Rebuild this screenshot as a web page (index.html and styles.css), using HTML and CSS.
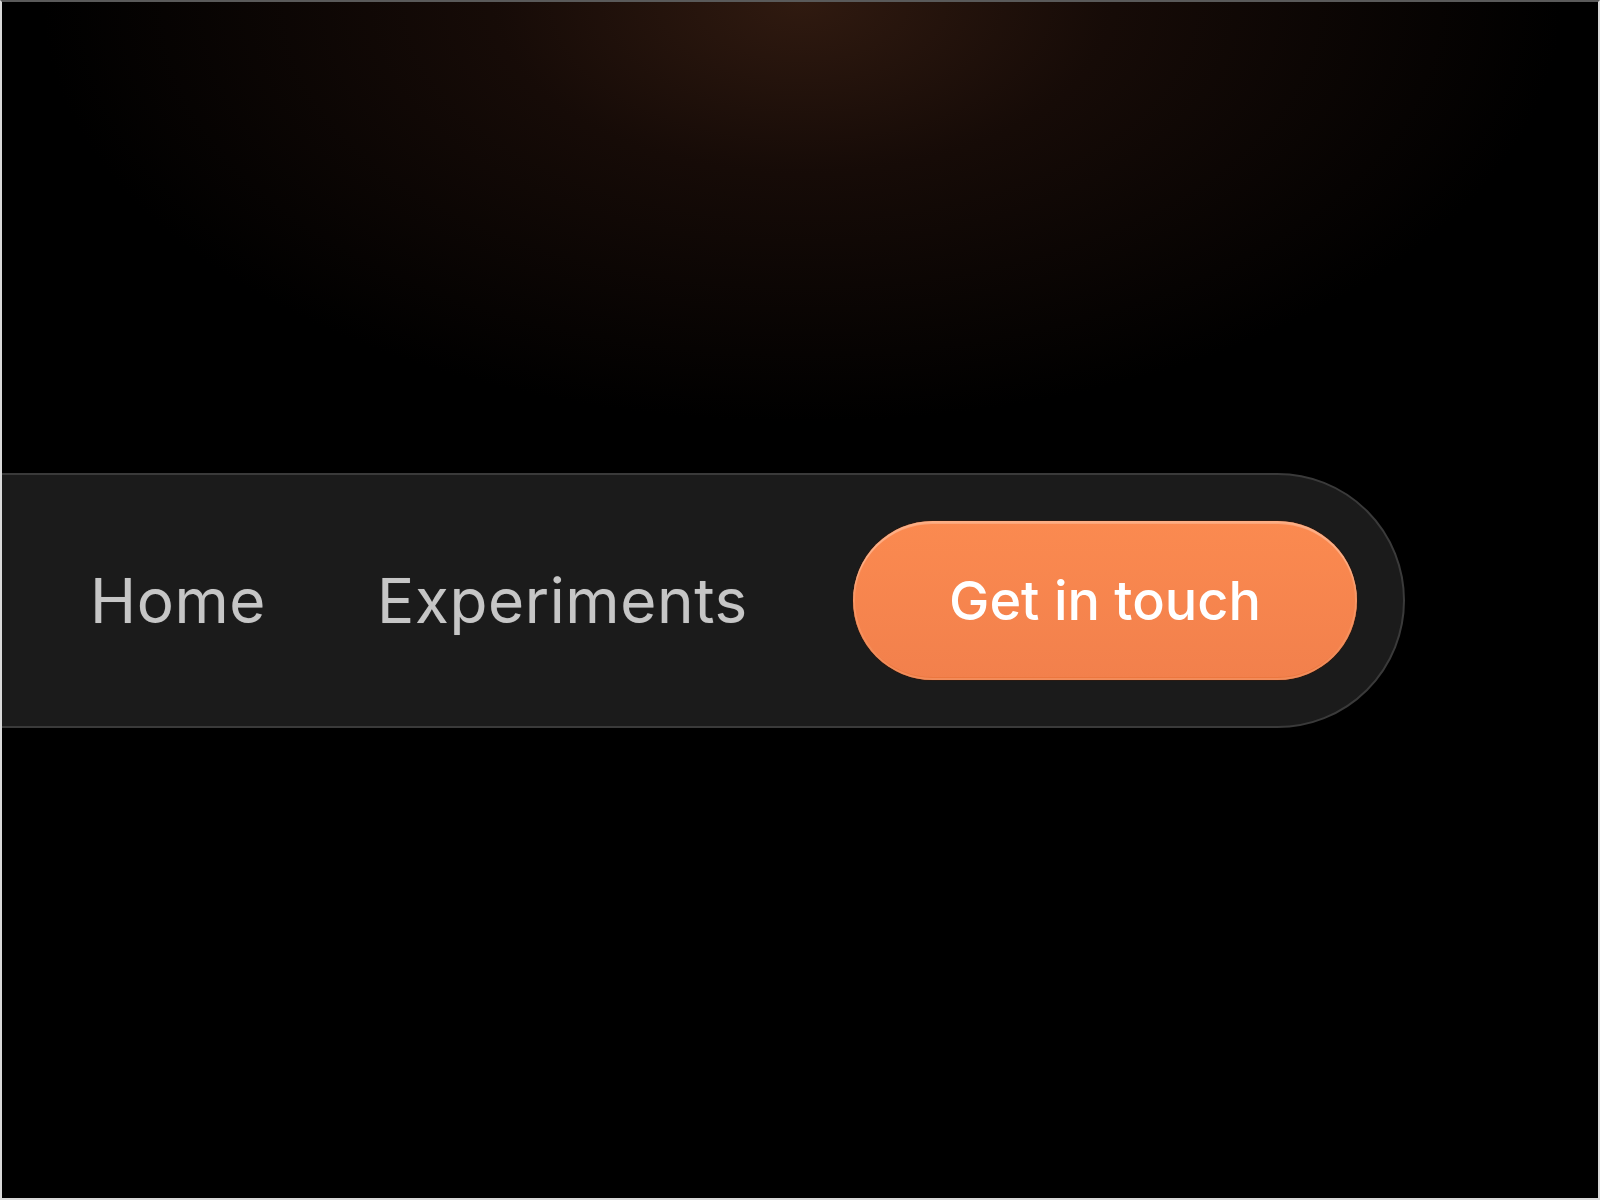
FILE: index.html
```html
<!DOCTYPE html>
<html lang="en">
<head>
<meta charset="utf-8">
<title>Nav</title>
<link rel="stylesheet" href="styles.css">
</head>
<body>
<div class="page">
  <nav class="bar">
    <a class="link" href="#">Home</a>
    <a class="link" href="#">Experiments</a>
    <a class="cta" href="#">Get in touch</a>
  </nav>
</div>
</body>
</html>
```
FILE: styles.css
```css
html, body {
  margin: 0;
  padding: 0;
  background: #000;
}
.page {
  box-sizing: border-box;
  width: 1600px;
  height: 1200px;
  overflow: hidden;
  border: 2px solid #d9d9d9;
  border-top-color: #5a5a5a;
  background:
    radial-gradient(ellipse 760px 420px at 800px 0px, rgba(48, 26, 16, 1) 0%, rgba(28, 14, 9, 0.8) 40%, rgba(0, 0, 0, 0) 100%),
    #000;
  display: flex;
  align-items: center;
  font-family: Inter, "Noto Sans", sans-serif;
}
.bar {
  box-sizing: border-box;
  margin-left: -200px;
  width: 1603px;
  height: 255px;
  padding: 46px 46px 46px 286px;
  border: 2px solid #3a3a3a;
  border-radius: 128px;
  background: #1b1b1b;
  display: flex;
  align-items: center;
}
.link {
  color: #c6c6c6;
  text-decoration: none;
  font-size: 62px;
  font-weight: 400;
  letter-spacing: 0.6px;
  text-shadow: 0 0 1px #555;
}
.link + .link {
  margin-left: 111px;
}
.cta {
  margin-left: auto;
  box-sizing: border-box;
  height: 159px;
  width: 504px;
  border-radius: 80px;
  display: flex;
  align-items: center;
  justify-content: center;
  color: #fff;
  text-decoration: none;
  font-size: 54px;
  font-weight: 500;
  background: linear-gradient(180deg, #fb8a50 0%, #f2804c 100%);
  box-shadow: 0 0 0 1px #2a1a12, inset 0 3px 0 rgba(255, 200, 170, 0.45), inset 0 0 0 2px rgba(255, 180, 140, 0.35), inset 0 -3px 0 rgba(230, 110, 50, 0.5);
}
```
